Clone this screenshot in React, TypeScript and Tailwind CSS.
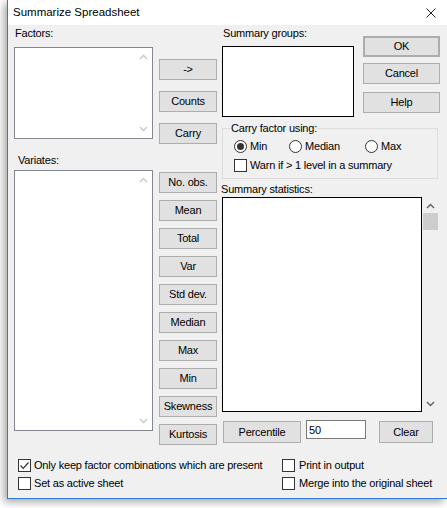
import React from 'react';

function Chevron({ dir, color }: { dir: 'up' | 'down'; color: string }) {
  return (
    <svg width="9" height="6" viewBox="0 0 9 6" className="block">
      <path
        d={dir === 'up' ? 'M1 5 L4.5 1.5 L8 5' : 'M1 1 L4.5 4.5 L8 1'}
        fill="none"
        stroke={color}
        strokeWidth="1.4"
      />
    </svg>
  );
}

function Btn({ label, className = '' }: { label: string; className?: string }) {
  return (
    <div
      className={`flex items-center justify-center bg-[#e1e1e1] border border-[#adadad] text-black ${className}`}
    >
      {label}
    </div>
  );
}

function Radio({ checked }: { checked?: boolean }) {
  return (
    <span className="w-[13px] h-[13px] rounded-full border border-[#333] bg-white flex items-center justify-center shrink-0">
      {checked && <span className="w-[7px] h-[7px] rounded-full bg-[#333]" />}
    </span>
  );
}

function Check({ checked }: { checked?: boolean }) {
  return (
    <span className="w-[13px] h-[13px] border border-[#333] bg-white flex items-center justify-center shrink-0">
      {checked && (
        <svg width="11" height="11" viewBox="0 0 11 11" className="block">
          <path d="M1.5 5.5 L4.2 8.3 L9.5 2.5" fill="none" stroke="#333" strokeWidth="1.2" />
        </svg>
      )}
    </span>
  );
}

// list box with a disabled vertical scrollbar inside
function ListBox({ className = '' }: { className?: string }) {
  return (
    <div className={`bg-white border border-[#828790] flex ${className}`}>
      <div className="flex-1" />
      <div className="w-[17px] flex flex-col justify-between items-center py-[6px]">
        <Chevron dir="up" color="#c8c8c8" />
        <Chevron dir="down" color="#c8c8c8" />
      </div>
    </div>
  );
}

const stats = ['No. obs.', 'Mean', 'Total', 'Var', 'Std dev.', 'Median', 'Max', 'Min', 'Skewness', 'Kurtosis'];

export default function App() {
  return (
    <div className="w-[447px] h-[508px] bg-white overflow-hidden font-['Liberation_Sans',Arial,sans-serif] text-[11px] leading-[15px] tracking-[-0.2px] text-black">
      <div className="ml-[7px] w-[440px] h-[499px] flex flex-col border-l border-b border-[#2a7bd1] shadow-[-3px_3px_8px_rgba(0,0,0,0.35)]">
        {/* title bar */}
        <div className="h-[25px] bg-white flex items-center justify-between pl-[5px] pr-[11px]">
          <span className="text-[11.5px] tracking-normal">Summarize Spreadsheet</span>
          <svg width="10" height="10" viewBox="0 0 10 10" className="block">
            <path d="M0.5 0.5 L9.5 9.5 M9.5 0.5 L0.5 9.5" stroke="#222" strokeWidth="1" />
          </svg>
        </div>

        <div className="flex-1 bg-[#f0f0f0] flex flex-col pl-[6px]">
          <div className="flex">
            {/* left column: lists */}
            <div className="w-[139px] flex flex-col">
              <div className="mt-[1px] pl-[1px]">Factors:</div>
              <ListBox className="mt-[6px] h-[92px]" />
              <div className="mt-[14px] pl-[4px]">Variates:</div>
              <ListBox className="mt-[2px] h-[261px]" />
            </div>

            {/* middle column: buttons */}
            <div className="ml-[6px] w-[58px] flex flex-col">
              <Btn label="->" className="mt-[34px] h-[21px]" />
              <Btn label="Counts" className="mt-[11px] h-[21px]" />
              <Btn label="Carry" className="mt-[11px] h-[21px]" />
              <div className="mt-[28px] flex flex-col gap-[7px]">
                {stats.map((s) => (
                  <Btn key={s} label={s} className="h-[21px]" />
                ))}
              </div>
            </div>

            {/* right column */}
            <div className="ml-[5px] w-[218px] flex flex-col">
              <div className="flex justify-between">
                <div className="flex flex-col">
                  <div className="mt-[1px] pl-[1px]">Summary groups:</div>
                  <div className="mt-[5px] w-[132px] h-[71px] bg-white border border-black" />
                </div>
                <div className="w-[77px] flex flex-col">
                  <Btn label="OK" className="mt-[11px] h-[21px] border-2 border-[#0078d7]" />
                  <Btn label="Cancel" className="mt-[6px] h-[21px]" />
                  <Btn label="Help" className="mt-[8px] h-[21px]" />
                </div>
              </div>

              <fieldset className="mt-[4px] w-[216px] border border-[#dcdcdc] pl-[11px] pb-[5px]">
                <legend className="-ml-[4px] px-[1px]">Carry factor using:</legend>
                <div className="mt-[3px] flex items-center">
                  <label className="w-[55px] flex items-center gap-[3px]">
                    <Radio checked />
                    <span>Min</span>
                  </label>
                  <label className="w-[76px] flex items-center gap-[3px]">
                    <Radio />
                    <span>Median</span>
                  </label>
                  <label className="flex items-center gap-[3px]">
                    <Radio />
                    <span>Max</span>
                  </label>
                </div>
                <label className="mt-[4px] flex items-center gap-[3px]">
                  <Check />
                  <span>Warn if &gt; 1 level in a summary</span>
                </label>
              </fieldset>

              <div className="mt-[3px] -ml-[1px]">Summary statistics:</div>
              <div className="flex">
                <div className="w-[200px] h-[215px] bg-white border border-black" />
                <div className="w-[17px] flex flex-col items-center pt-[6px] pb-[5px]">
                  <Chevron dir="up" color="#606060" />
                  <div className="mt-[4px] w-[15px] h-[17px] bg-[#cdcdcd]" />
                  <div className="mt-auto">
                    <Chevron dir="down" color="#606060" />
                  </div>
                </div>
              </div>

              <div className="mt-[9px] flex items-start">
                <Btn label="Percentile" className="ml-[1px] w-[78px] h-[22px]" />
                <input
                  readOnly
                  value="50"
                  className="-mt-[1px] ml-[5px] w-[60px] h-[19px] bg-white border border-[#7a7a7a] px-[2px] text-[11px] leading-[15px] outline-none"
                />
                <Btn label="Clear" className="ml-[13px] w-[54px] h-[22px]" />
              </div>
            </div>
          </div>

          {/* bottom options */}
          <div className="mt-[14px] pl-[4px] grid grid-cols-[264px_1fr] gap-y-[5px]">
            <label className="flex items-center gap-[3px] h-[13px]">
              <Check checked />
              <span>Only keep factor combinations which are present</span>
            </label>
            <label className="flex items-center gap-[4px] h-[13px]">
              <Check />
              <span>Print in output</span>
            </label>
            <label className="flex items-center gap-[3px] h-[13px]">
              <Check />
              <span>Set as active sheet</span>
            </label>
            <label className="flex items-center gap-[4px] h-[13px]">
              <Check />
              <span>Merge into the original sheet</span>
            </label>
          </div>
        </div>
      </div>
    </div>
  );
}
